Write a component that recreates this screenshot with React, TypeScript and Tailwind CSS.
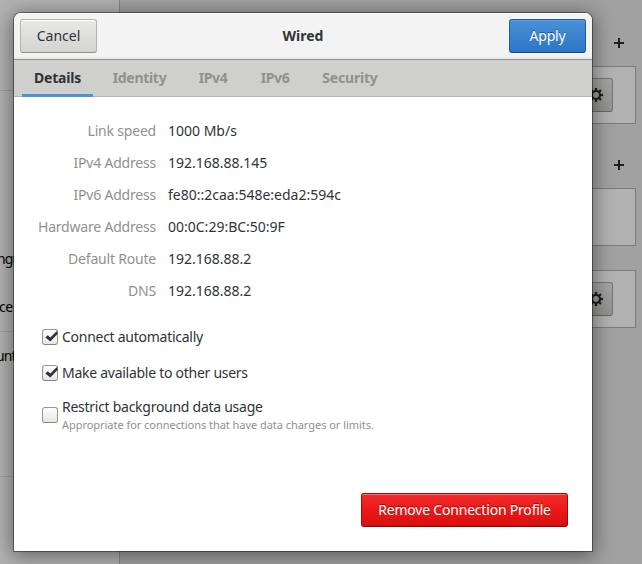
import { useState } from 'react';
import type { ReactNode } from 'react';

const tabs = [
  { name: 'Details', className: 'w-[71px] tracking-[-0.2px]' },
  { name: 'Identity', className: 'w-[93px] tracking-[-0.3px]' },
  { name: 'IPv4', className: 'w-[54px] tracking-[-0.4px]' },
  { name: 'IPv6', className: 'w-[70px] tracking-[-0.4px]' },
  { name: 'Security', className: 'w-[80px] tracking-[-0.2px]' },
];

const details = [
  { label: 'Link speed', value: '1000 Mb/s' },
  { label: 'IPv4 Address', value: '192.168.88.145' },
  { label: 'IPv6 Address', value: 'fe80::2caa:548e:eda2:594c' },
  { label: 'Hardware Address', value: '00:0C:29:BC:50:9F' },
  { label: 'Default Route', value: '192.168.88.2' },
  { label: 'DNS', value: '192.168.88.2' },
];

function Plus() {
  return (
    <svg width="10" height="10" viewBox="0 0 10 10" className="block" fill="#1c1f20">
      <path d="M4 0h2v4h4v2H6v4H4V6H0V4h4z" />
    </svg>
  );
}

function Gear() {
  return (
    <svg width="14" height="14" viewBox="-7 -7 14 14" className="block">
      <circle r="4" fill="none" stroke="#1c1f20" strokeWidth="2.1" />
      {[0, 45, 90, 135, 180, 225, 270, 315].map((angle) => (
        <rect key={angle} x="-1.1" y="-7" width="2.2" height="3" fill="#1c1f20" transform={`rotate(${angle})`} />
      ))}
    </svg>
  );
}

function GearRow() {
  return (
    <div className="flex h-[58px] items-center justify-end border border-[#7b7b7b] bg-[#b2b2b2] pr-[22px]">
      <div className="flex h-[34px] w-[35px] items-center justify-center rounded-[3px] border border-[#777775] border-b-[#686866] bg-linear-to-b from-[#a4a4a2] to-[#929290]">
        <Gear />
      </div>
    </div>
  );
}

function Check({ checked, onChange }: { checked: boolean; onChange: () => void }) {
  return (
    <button
      role="checkbox"
      aria-checked={checked}
      onClick={onChange}
      className="size-4 shrink-0 rounded-[3px] border border-[#979792] border-b-[#858580] bg-linear-to-b from-white to-[#e6e6e5]"
    >
      {checked && (
        <svg width="14" height="14" viewBox="0 0 14 14" className="block overflow-visible">
          <path d="M2.4 7.4L4.8 5.2l2.5 2.3L13.4 1.5h1.1v2.6L7.3 11.4z" fill="#2e3436" />
        </svg>
      )}
    </button>
  );
}

function Option({ checked, onChange, children }: { checked: boolean; onChange: () => void; children: ReactNode }) {
  return (
    <div className="flex h-9 items-center gap-1 tracking-[-0.27px]">
      <Check checked={checked} onChange={onChange} />
      {children}
    </div>
  );
}

function Background() {
  return (
    <div className="flex h-full">
      <div className="flex w-[120px] shrink-0 flex-col border-r border-[#868686] bg-[#b2b2b2] text-[14px] leading-5 tracking-[-0.9px] text-black">
        <div className="h-[91px] border-b border-[#9d9d9d]" />
        <div className="flex h-[241px] flex-col border-b border-[#9d9d9d] pt-[158px]">
          <span className="-ml-[3px]">ngu</span>
          <span className="-ml-[1px] mt-7 tracking-[-0.4px]">ce</span>
        </div>
        <div className="h-[145px] border-b border-[#9d9d9d] pt-[14px]">
          <span className="-ml-[4px]">unt</span>
        </div>
      </div>
      <div className="flex-1 bg-[#a1a1a1] pr-1.5 pt-[38px]">
        <div className="flex justify-end pr-3"><Plus /></div>
        <div className="mt-[18px]"><GearRow /></div>
        <div className="mt-9 flex justify-end pr-3"><Plus /></div>
        <div className="mt-[18px] h-[58px] border border-[#7b7b7b] bg-[#b2b2b2]" />
        <div className="mt-6"><GearRow /></div>
      </div>
    </div>
  );
}

export default function App() {
  const [active, setActive] = useState('Details');
  const [options, setOptions] = useState([true, true, false]);

  const toggle = (index: number) => {
    setOptions(options.map((value, i) => (i === index ? !value : value)));
  };

  return (
    <div className="relative h-[564px] w-[642px] overflow-hidden font-['Noto_Sans',sans-serif] text-[14px] leading-5 text-[#2e3436]">
      <Background />

      <div className="absolute left-[14px] top-[13px] flex h-[538px] w-[578px] flex-col overflow-hidden rounded-t-[7px] bg-white shadow-[0_0_0_1px_rgba(0,0,0,0.4),0_3px_20px_2px_rgba(0,0,0,0.45)]">
        <header className="flex h-[47px] shrink-0 justify-between border-b border-[#929290] bg-[#f3f3f3] px-1.5 pt-1.5 shadow-[inset_0_1px_white,inset_0_-2px_#e8e8e7]">
          <button className="h-[34px] w-[77px] rounded-[3px] border border-[#b4b4b0] border-b-[#92928e] bg-linear-to-b from-[#e9e9e8] to-[#d3d3d1] shadow-[inset_0_1px_white]">
            Cancel
          </button>
          <h1 className="pt-[7px] font-bold">Wired</h1>
          <button className="h-[34px] w-[77px] rounded-[3px] border border-[#1f5c9e] border-b-[#184a80] bg-linear-to-b from-[#4a90d9] to-[#2a76c6] tracking-[-0.2px] text-white shadow-[inset_0_1px_#5f9ddd] text-shadow-[0_-1px_rgba(0,0,0,0.4)]">
            Apply
          </button>
        </header>

        <nav className="flex h-[37px] shrink-0 border-b border-[#b5b5b2] bg-[#cfcfcd] pl-2">
          {tabs.map((tab) => (
            <button
              key={tab.name}
              onClick={() => setActive(tab.name)}
              className={`-mb-px shrink-0 border-b-3 pt-[1px] font-bold ${tab.className} ${
                active === tab.name ? 'border-[#4a90d9] text-[#2e3436]' : 'border-transparent text-[#8f9190]'
              }`}
            >
              {tab.name}
            </button>
          ))}
        </nav>

        <dl className="flex flex-col gap-3 pt-6">
          {details.map((row) => (
            <div key={row.label} className="flex gap-3">
              <dt className="w-[142px] text-right tracking-[-0.2px] text-[#8f9190]">{row.label}</dt>
              <dd>{row.value}</dd>
            </div>
          ))}
        </dl>

        <div className="flex flex-col pl-7 pt-[18px]">
          <Option checked={options[0]} onChange={() => toggle(0)}>
            <span>Connect automatically</span>
          </Option>
          <Option checked={options[1]} onChange={() => toggle(1)}>
            <span>Make available to other users</span>
          </Option>
          <div className="pt-1.5">
            <Option checked={options[2]} onChange={() => toggle(2)}>
              <div className="flex flex-col pb-px">
                <span>Restrict background data usage</span>
                <span className="text-[11px] leading-4 tracking-[-0.04px] text-[#8f9190]">
                  Appropriate for connections that have data charges or limits.
                </span>
              </div>
            </Option>
          </div>
        </div>

        <button className="mb-6 mr-6 mt-auto h-[34px] w-[207px] self-end rounded-[3px] border border-[#9c0b0b] border-b-[#7a0808] bg-linear-to-b from-[#f12b2b] via-[#ed1717] to-[#d81010] tracking-[-0.2px] text-white shadow-[inset_0_1px_#f47474] text-shadow-[0_-1px_rgba(0,0,0,0.4)]">
          Remove Connection Profile
        </button>
      </div>
    </div>
  );
}
